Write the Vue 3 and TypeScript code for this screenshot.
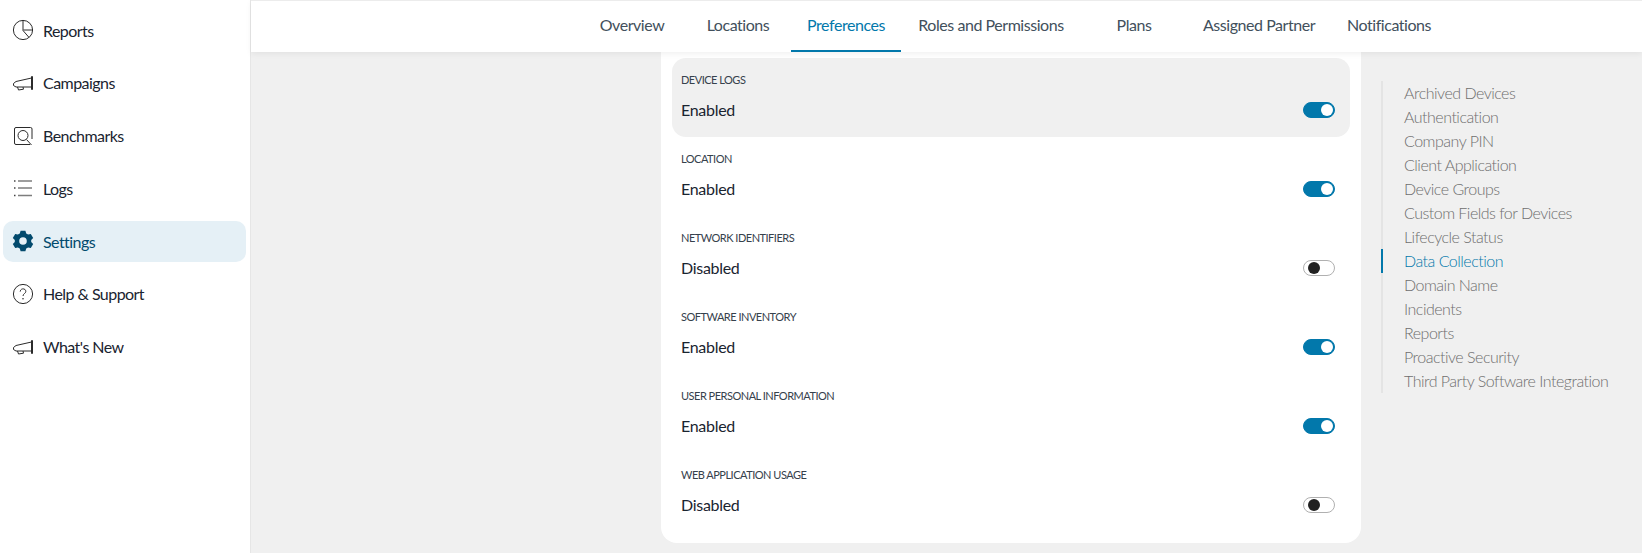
<script setup lang="ts">
import { reactive } from 'vue'

const navItems = [
  { label: 'Reports', icon: 'pie' },
  { label: 'Campaigns', icon: 'horn' },
  { label: 'Benchmarks', icon: 'bench' },
  { label: 'Logs', icon: 'list' },
  { label: 'Settings', icon: 'gear', active: true },
  { label: 'Help & Support', icon: 'help' },
  { label: "What's New", icon: 'horn' },
]
const tabs = ['Overview', 'Locations', 'Preferences', 'Roles and Permissions', 'Plans', 'Assigned Partner', 'Notifications']
const rows = reactive([
  { label: 'Device Logs', on: true, hi: true },
  { label: 'Location', on: true, hi: false },
  { label: 'Network Identifiers', on: false, hi: false },
  { label: 'Software Inventory', on: true, hi: false },
  { label: 'User Personal Information', on: true, hi: false },
  { label: 'Web Application Usage', on: false, hi: false },
])
const sections = ['Archived Devices', 'Authentication', 'Company PIN', 'Client Application', 'Device Groups', 'Custom Fields for Devices', 'Lifecycle Status', 'Data Collection', 'Domain Name', 'Incidents', 'Reports', 'Proactive Security', 'Third Party Software Integration']
</script>

<template>
  <div class="page">
    <aside class="sidebar">
      <a v-for="item in navItems" :key="item.label" class="nav-item" :class="{ active: item.active }">
        <svg class="icon" viewBox="0 0 22 22" width="22" height="22" fill="none" stroke="#2b2b2b" stroke-width="1">
          <template v-if="item.icon === 'pie'">
            <circle cx="11" cy="11" r="9.6" />
            <path d="M11 1.4V11.5L16.8 18.2M11.3 11H20.5" />
          </template>
          <template v-else-if="item.icon === 'horn'">
            <path d="M20.5 4.5V17.5H19.5V4.5ZM19.5 6L4 9.5L1.5 11.5V13.5L4 15H19.5M5.5 15L6.5 18L11.5 17.2L11 15" />
          </template>
          <template v-else-if="item.icon === 'bench'">
            <path d="M18 19.5H4Q2.5 19.5 2.5 18V4Q2.5 2.5 4 2.5H18.5Q20 2.5 20 4V14" />
            <circle cx="11" cy="10.5" r="5" />
            <path d="M14.5 14.5L19.5 20" />
          </template>
          <template v-else-if="item.icon === 'list'">
            <path d="M6 4H20M6 11H20M6 18.500H20" stroke="#7d7d7d" stroke-width="1.6" />
            <path d="M2 4H3.500M2 11H3.500M2 18.500H3.500" stroke="#444" stroke-width="1.6" />
          </template>
          <template v-else-if="item.icon === 'gear'">
            <path fill="#024a6d" stroke="none" fill-rule="evenodd" d="M8.600 0.800H13.400L14.200 3.500L16.100 4.600L18.800 3.900L21.200 8L19.200 10V12L21.200 14L18.800 18.100L16.100 17.400L14.200 18.500L13.400 21.200H8.600L7.800 18.500L5.900 17.400L3.200 18.100L0.800 14L2.800 12V10L0.800 8L3.200 3.900L5.900 4.600L7.800 3.500ZM11 7.200A3.800 3.800 0 1 0 11 14.800A3.800 3.800 0 1 0 11 7.200Z" />
          </template>
          <template v-else>
            <circle cx="11" cy="11" r="9.6" />
            <path d="M8.200 8.600C8.300 5 13.800 5 13.800 8.400C13.800 10.600 11 10.600 11 13" />
            <circle cx="11" cy="15.800" r="0.800" fill="#2b2b2b" stroke="none" />
          </template>
        </svg>
        <span>{{ item.label }}</span>
      </a>
    </aside>

    <div class="main">
      <nav class="tabs">
        <a v-for="tab in tabs" :key="tab" class="tab" :class="{ current: tab === 'Preferences' }">{{ tab }}</a>
      </nav>

      <div class="content">
        <section class="card">
          <div v-for="row in rows" :key="row.label" class="row" :class="{ hi: row.hi }">
            <div class="row-label">{{ row.label }}</div>
            <div class="row-value">
              <span>{{ row.on ? 'Enabled' : 'Disabled' }}</span>
              <button type="button" class="switch" :class="{ on: row.on }" role="switch" :aria-checked="row.on" :aria-label="row.label" @click="row.on = !row.on"><i class="knob"></i></button>
            </div>
          </div>
        </section>

        <ul class="sections">
          <li v-for="s in sections" :key="s" :class="{ current: s === 'Data Collection' }">{{ s }}</li>
        </ul>
      </div>
    </div>
  </div>
</template>

<style>
html, body { margin: 0; background: #f0f0f0; overflow: hidden; }
</style>

<style scoped>
.page {
  display: flex;
  height: 553px;
  overflow: hidden;
  font-family: Lato, "Liberation Sans", sans-serif;
  font-size: 16px;
  color: #1a2430;
}
.sidebar {
  width: 251px;
  flex: none;
  box-sizing: border-box;
  background: #fff;
  border-right: 1px solid #e6e6e6;
  padding: 10px 4px 0 3px;
  display: flex;
  flex-direction: column;
  gap: 11.75px;
}
.nav-item {
  height: 41px;
  flex: none;
  display: flex;
  align-items: center;
  gap: 9px;
  padding-left: 9px;
  padding-bottom: 1px;
  box-sizing: border-box;
  border-radius: 10px;
  letter-spacing: -0.55px;
}
.nav-item.active { background: #e5f0f6; color: #024a6d; }
.icon { flex: none; }
.main { flex: 1; min-width: 0; display: flex; flex-direction: column; }
.tabs {
  position: relative;
  z-index: 1;
  height: 52px;
  flex: none;
  box-sizing: border-box;
  border-top: 1px solid #ececec;
  background: #fff;
  box-shadow: 0 2px 6px rgba(0, 0, 0, 0.06);
  display: grid;
  grid-template-columns: 106px 106px 110px 180px 106px 144px 116px;
  padding-left: 328px;
}
.tab {
  display: flex;
  align-items: center;
  justify-content: center;
  padding-bottom: 3px;
  color: #42505c;
  border-bottom: 2px solid transparent;
  white-space: nowrap;
  letter-spacing: -0.45px;
}
.tab.current { color: #0278ab; border-bottom-color: #0278ab; }
.content { flex: 1; display: flex; align-items: flex-start; padding-left: 410px; }
.card {
  width: 700px;
  box-sizing: border-box;
  background: #fff;
  padding: 6px 11px 11px;
  border-radius: 0 0 16px 16px;
}
.row {
  height: 79px;
  box-sizing: border-box;
  padding: 14px 10px 0 9px;
  border-radius: 14px;
}
.row.hi { background: #f0f0f0; }
.row-label {
  font-size: 11px;
  line-height: 16px;
  text-transform: uppercase;
  color: #36414c;
  letter-spacing: -0.5px;
}
.row-value {
  display: flex;
  align-items: center;
  justify-content: space-between;
  margin-top: 5px;
  height: 32px;
  padding-right: 5px;
  letter-spacing: -0.3px;
}
.switch {
  width: 32px;
  height: 16px;
  margin-top: 1px;
  padding: 0;
  box-sizing: border-box;
  border: 1px solid #b0b0b0;
  border-radius: 8px;
  background: #fff;
  display: flex;
  align-items: center;
  cursor: pointer;
}
.knob { width: 12px; height: 12px; border-radius: 50%; background: #212121; margin-left: 4px; }
.switch.on { background: #0278ab; border-color: #0278ab; justify-content: flex-end; }
.switch.on .knob { background: #fff; margin: 0 1px 0 0; }
.sections {
  list-style: none;
  margin: 29px 0 0 20px;
  padding: 0;
  border-left: 2px solid #e4e4e4;
}
.sections li {
  height: 24px;
  line-height: 24px;
  padding-left: 21px;
  margin-left: -2px;
  border-left: 2px solid transparent;
  color: #6e6e6e;
  font-weight: 300;
  white-space: nowrap;
  letter-spacing: -0.5px;
}
.sections li.current { color: #0278ab; border-left-color: #0278ab; }
</style>
